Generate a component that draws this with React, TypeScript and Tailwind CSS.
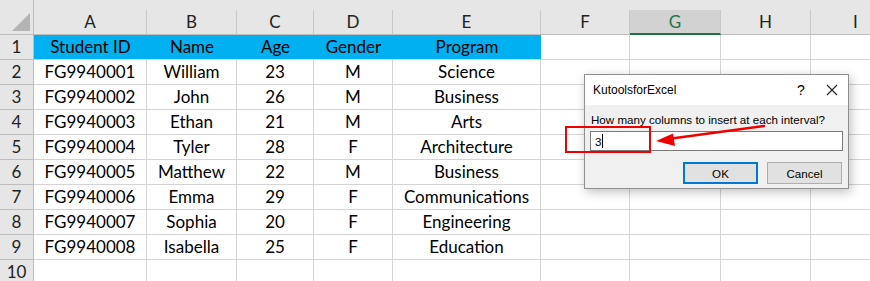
import React from 'react';

const cols = [
  { key: 'A', w: 113 },
  { key: 'B', w: 90 },
  { key: 'C', w: 77 },
  { key: 'D', w: 79 },
  { key: 'E', w: 148 },
  { key: 'F', w: 89 },
  { key: 'G', w: 91 },
  { key: 'H', w: 90 },
  { key: 'I', w: 90 },
];

const header = ['Student ID', 'Name', 'Age', 'Gender', 'Program'];

const students = [
  ['FG9940001', 'William', '23', 'M', 'Science'],
  ['FG9940002', 'John', '26', 'M', 'Business'],
  ['FG9940003', 'Ethan', '21', 'M', 'Arts'],
  ['FG9940004', 'Tyler', '28', 'F', 'Architecture'],
  ['FG9940005', 'Matthew', '22', 'M', 'Business'],
  ['FG9940006', 'Emma', '29', 'F', 'Communications'],
  ['FG9940007', 'Sophia', '20', 'F', 'Engineering'],
  ['FG9940008', 'Isabella', '25', 'F', 'Education'],
  [],
];

function Sheet() {
  return (
    <div className="font-['Lato',sans-serif] text-[17px] text-black">
      {/* column letters */}
      <div className="flex h-[35px] bg-[#e6e6e6]">
        <div className="relative w-[34px] shrink-0 border-r border-b border-[#bdbdbd]">
          <svg className="absolute right-[3px] bottom-[3px]" width="18" height="18" viewBox="0 0 18 18">
            <polygon points="18,0 18,18 0,18" fill="#b4b4b4" />
          </svg>
        </div>
        {cols.map((c) => (
          <div
            key={c.key}
            style={{ width: c.w }}
            className={
              'mt-[10px] flex shrink-0 items-center justify-center border-r border-[#c8c8c8] ' +
              (c.key === 'G'
                ? 'border-b-2 border-b-[#217346] bg-[#d2d2d2] text-[#217346]'
                : 'border-b border-b-[#bdbdbd] text-[#222]')
            }
          >
            {c.key}
          </div>
        ))}
        <div className="mt-[10px] flex-1 border-b border-[#bdbdbd]" />
      </div>

      {/* header row */}
      <div className="flex h-[25px]">
        <div className="flex w-[34px] shrink-0 items-center justify-center border-r border-b border-[#bdbdbd] bg-[#e6e6e6] text-[#222]">
          1
        </div>
        <div className="flex w-[507px] shrink-0 border-b border-[#d4d4d4] bg-[#00b0f0]">
          {header.map((h, i) => (
            <div key={h} style={{ width: cols[i].w }} className="flex shrink-0 items-center justify-center">
              {h}
            </div>
          ))}
        </div>
        {cols.slice(5).map((c) => (
          <div key={c.key} style={{ width: c.w }} className="shrink-0 border-r border-b border-[#d4d4d4]" />
        ))}
        <div className="flex-1 border-b border-[#d4d4d4]" />
      </div>

      {students.map((row, r) => (
        <div key={r} className="flex h-[25px]">
          <div className="flex w-[34px] shrink-0 items-center justify-center border-r border-b border-[#bdbdbd] bg-[#e6e6e6] text-[#222]">
            {r + 2}
          </div>
          {cols.map((c, i) => (
            <div
              key={c.key}
              style={{ width: c.w }}
              className="flex shrink-0 items-center justify-center border-r border-b border-[#d4d4d4]"
            >
              {row[i] ?? ''}
            </div>
          ))}
          <div className="flex-1 border-b border-[#d4d4d4]" />
        </div>
      ))}
    </div>
  );
}

function InsertDialog() {
  return (
    <div className="absolute left-[584px] top-[74px] flex h-[115px] w-[265px] flex-col border border-[#8f8f8f] bg-[#f0f0f0] font-['Liberation_Sans',sans-serif] text-[11.6px] text-black shadow-[2px_3px_10px_rgba(0,0,0,0.25)]">
      <div className="flex h-[30px] items-center bg-white pl-[8px]">
        <span className="flex-1 text-[12px]">KutoolsforExcel</span>
        <span className="w-[30px] text-center text-[14px]">?</span>
        <svg className="mr-[10px] ml-[10px]" width="12" height="12" viewBox="0 0 12 12">
          <path d="M1 1 L11 11 M11 1 L1 11" stroke="#222" strokeWidth="1.1" fill="none" />
        </svg>
      </div>
      <div className="px-[5px] pt-[6px]">
        <div className="pl-[1px]">How many columns to insert at each interval?</div>
        <div className="mt-[3px] flex h-[20px] items-center border border-[#7a7a7a] bg-white pl-[4px]">
          <span>3</span>
          <span className="ml-[1px] h-[14px] w-px bg-black" />
        </div>
        <div className="mt-[11px] flex justify-end gap-[9px] pr-[1px]">
          <button className="h-[22px] w-[75px] border-2 border-[#0078d7] bg-[#e1e1e1]">OK</button>
          <button className="h-[22px] w-[75px] border border-[#adadad] bg-[#e1e1e1]">Cancel</button>
        </div>
      </div>
    </div>
  );
}

function Callout() {
  return (
    <>
      <div className="absolute left-[565px] top-[126px] h-[27px] w-[86px] border-2 border-[#f00000]" />
      <svg className="absolute left-0 top-0" width="870" height="281" viewBox="0 0 870 281">
        <line x1="764" y1="126" x2="668" y2="139" stroke="#f00000" strokeWidth="2.5" strokeLinecap="round" />
        <polygon points="656,141 673,133.5 675,146" fill="#f00000" />
      </svg>
    </>
  );
}

export default function App() {
  return (
    <div className="relative h-[281px] w-[870px] overflow-hidden bg-white">
      <Sheet />
      <InsertDialog />
      <Callout />
    </div>
  );
}
